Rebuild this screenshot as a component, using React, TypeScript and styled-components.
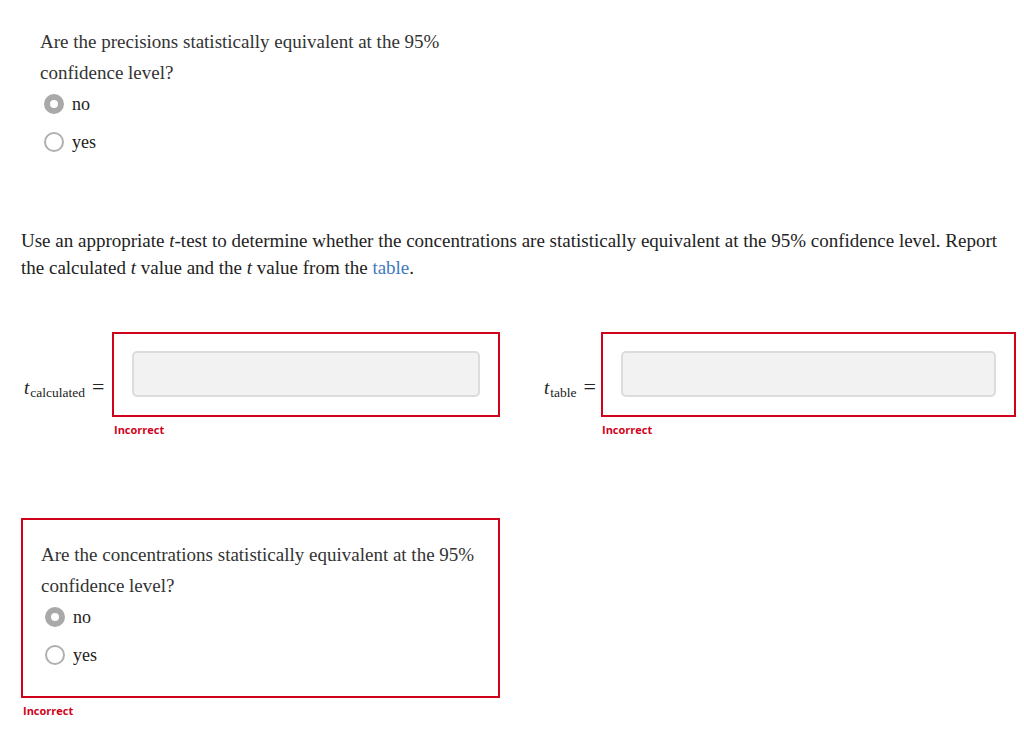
import React from 'react'
import styled, { createGlobalStyle } from 'styled-components'

const GlobalStyle = createGlobalStyle`
  body {
    margin: 0;
    background: #fff;
    color: #333;
    font-family: "Liberation Serif", "Times New Roman", serif;
  }
`

const Page = styled.div`
  padding: 26px 0 0 21px;
  width: 996px;
`

const Question = styled.div<{ $inset?: boolean }>`
  margin-left: ${p => (p.$inset ? '0' : '19px')};
  width: 440px;
`

const Prompt = styled.div`
  font-size: 19px;
  line-height: 31px;
`

const Choices = styled.div`
  display: flex;
  flex-direction: column;
  margin-top: -3px;
`

const Choice = styled.label`
  display: flex;
  align-items: center;
  height: 38px;
  padding-left: 4px;
  gap: 8px;
  font-size: 18px;
  color: #222;
`

const Radio = styled.span<{ $checked?: boolean }>`
  width: 20px;
  height: 20px;
  box-sizing: border-box;
  border-radius: 50%;
  background: #fff;
  border: ${p => (p.$checked ? '6px solid #a9a9a9' : '2px solid #b0b0b0')};
`

const Paragraph = styled.p`
  margin: 66px 0 0 0;
  font-size: 19px;
  line-height: 27px;
  color: #222;
`

const Link = styled.a`
  color: #3f7ac0;
  text-decoration: none;
`

const AnswerRow = styled.div`
  display: flex;
  gap: 41px;
  margin-top: 51px;
`

const AnswerCol = styled.div<{ $width: number }>`
  width: ${p => p.$width}px;
  display: flex;
  flex-direction: column;
`

const AnswerLine = styled.div`
  display: flex;
  align-items: flex-end;
`

const Label = styled.div<{ $width: number }>`
  width: ${p => p.$width}px;
  flex-shrink: 0;
  box-sizing: border-box;
  padding: 0 0 14px 3px;
  font-size: 19px;
  line-height: 20px;
  color: #222;
  white-space: nowrap;
`

const Sub = styled.sub`
  font-size: 13.5px;
  vertical-align: -3px;
  margin-left: 1px;
`

const Eq = styled.span`
  margin-left: 7px;
  font-size: 22px;
`

const ErrorBox = styled.div`
  flex: 1;
  border: 2px solid #d0021b;
  padding: 17px 18px 18px 18px;
`

const Input = styled.div`
  height: 46px;
  box-sizing: border-box;
  border: 2px solid #dcdcdc;
  border-radius: 5px;
  background: #f2f2f2;
`

const Incorrect = styled.div<{ $indent: number }>`
  margin: 5px 0 0 ${p => p.$indent}px;
  font-family: "Open Sans", "Liberation Sans", sans-serif;
  font-weight: 700;
  font-size: 11px;
  line-height: 16px;
  color: #d0021b;
`

const QuestionBox = styled.div`
  width: 479px;
  box-sizing: border-box;
  margin-top: 80px;
  border: 2px solid #d0021b;
  padding: 19px 18px 22px 18px;
`

const Choose = ({ checked }: { checked: string }) => (
  <Choices>
    {['no', 'yes'].map(c => (
      <Choice key={c}>
        <Radio $checked={c === checked} />
        {c}
      </Choice>
    ))}
  </Choices>
)

const App = () => {
  return (
    <Page>
      <GlobalStyle />
      <Question>
        <Prompt>Are the precisions statistically equivalent at the 95% confidence level?</Prompt>
        <Choose checked="no" />
      </Question>

      <Paragraph>
        Use an appropriate <i>t</i>-test to determine whether the concentrations are statistically
        equivalent at the 95% confidence level. Report the calculated <i>t</i> value and the{' '}
        <i>t</i> value from the <Link href="#">table</Link>.
      </Paragraph>

      <AnswerRow>
        <AnswerCol $width={479}>
          <AnswerLine>
            <Label $width={91}>
              <i>t</i>
              <Sub>calculated</Sub>
              <Eq>=</Eq>
            </Label>
            <ErrorBox>
              <Input />
            </ErrorBox>
          </AnswerLine>
          <Incorrect $indent={93}>Incorrect</Incorrect>
        </AnswerCol>
        <AnswerCol $width={475}>
          <AnswerLine>
            <Label $width={60}>
              <i>t</i>
              <Sub>table</Sub>
              <Eq>=</Eq>
            </Label>
            <ErrorBox>
              <Input />
            </ErrorBox>
          </AnswerLine>
          <Incorrect $indent={61}>Incorrect</Incorrect>
        </AnswerCol>
      </AnswerRow>

      <QuestionBox>
        <Question $inset>
          <Prompt>Are the concentrations statistically equivalent at the 95% confidence level?</Prompt>
          <Choose checked="no" />
        </Question>
      </QuestionBox>
      <Incorrect $indent={2}>Incorrect</Incorrect>
    </Page>
  )
}

export default App
